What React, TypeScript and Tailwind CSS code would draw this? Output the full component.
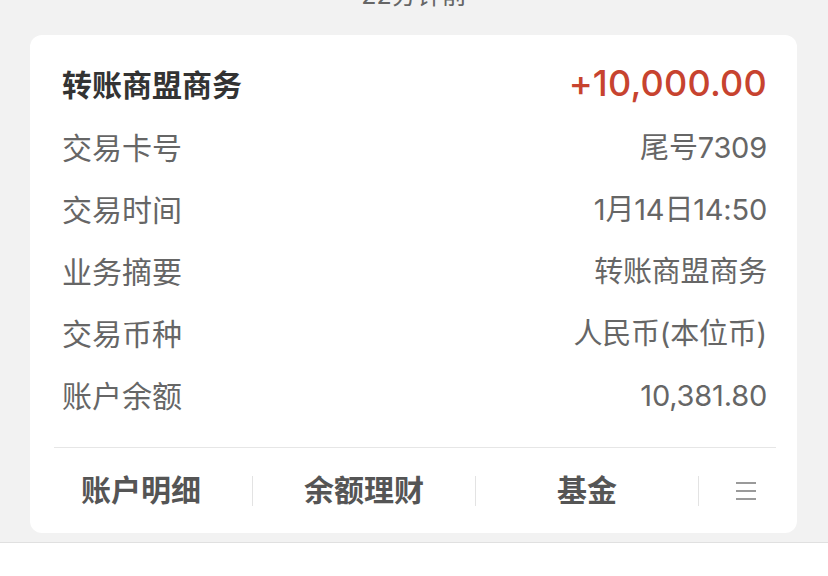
const rows: { label: string; value: string }[] = [
  { label: '交易卡号', value: '尾号7309' },
  { label: '交易时间', value: '1月14日14:50' },
  { label: '业务摘要', value: '转账商盟商务' },
  { label: '交易币种', value: '人民币(本位币)' },
  { label: '账户余额', value: '10,381.80' },
];

const tabs = ['账户明细', '余额理财', '基金'];

function MenuIcon() {
  return (
    <svg width="22" height="18" viewBox="0 0 22 18" fill="none" stroke="#7a7a7a" strokeWidth="1.6">
      <path d="M1 1h20M1 9h20M1 17h20" />
    </svg>
  );
}

export default function App() {
  return (
    <div
      className="w-[828px] h-[576px] overflow-hidden bg-[#f2f2f2] flex flex-col"
      style={{ fontFamily: 'Inter, "Noto Sans CJK SC", "Noto Sans", sans-serif' }}
    >
      <div className="-mt-[20px] h-[30px] leading-[30px] text-center text-[25px] text-[#666]">22分钟前</div>

      <div className="mt-[25px] ml-[30px] w-[767px] h-[498px] bg-white rounded-[12px] flex flex-col">
        <div className="mt-[18px] h-[64px] pl-8 pr-[30px] flex items-center justify-between">
          <span className="text-[30px] font-bold text-[#333]">转账商盟商务</span>
          <span className="text-[36px] font-medium tracking-[0.2px] text-[#c7432f] -mt-[5px]">+10,000.00</span>
        </div>
        {rows.map((row) => (
          <div key={row.label} className="h-[62px] pl-8 pr-[30px] flex items-center justify-between text-[#666]">
            <span className="text-[30px]">{row.label}</span>
            <span className="text-[29px] tracking-[-0.2px]">{row.value}</span>
          </div>
        ))}
        <div className="mt-[20px] ml-6 mr-[21px] h-px bg-[#e6e6e6]" />
        <div className="flex-1 flex items-center">
          {tabs.map((tab) => (
            <div key={tab} className="w-[223px] flex items-center">
              <span className="flex-1 text-center text-[30px] font-bold text-[#555]">{tab}</span>
              <span className="w-px h-[30px] bg-[#e3e3e3]" />
            </div>
          ))}
          <div className="flex-1 flex justify-center pr-[5px]">
            <MenuIcon />
          </div>
        </div>
      </div>

      <div className="mt-[9px] h-px bg-[#e0e0e0]" />
      <div className="flex-1 bg-white" />
    </div>
  );
}
